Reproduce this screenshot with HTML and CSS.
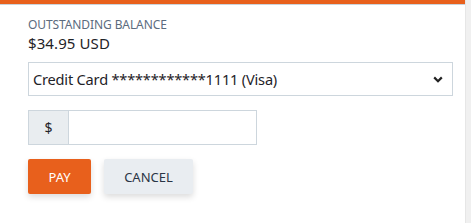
FILE: index.html
```html
<!DOCTYPE html>
<html>
<head>
<meta charset="utf-8">
<link rel="stylesheet" href="styles.css">
</head>
<body>
<div class="page">
  <div class="main">
    <div class="topbar"></div>
    <div class="content">
      <div class="label">OUTSTANDING BALANCE</div>
      <div class="amount">$34.95 USD</div>
      <div class="select">
        <span class="select-text">Credit Card ************1111 (Visa)</span>
        <svg class="chev" width="10" height="7" viewBox="0 0 10 7"><path d="M1.2 1.4 L5 5.2 L8.8 1.4" fill="none" stroke="#222" stroke-width="2.2"/></svg>
      </div>
      <div class="group">
        <div class="addon">$</div>
        <div class="field"></div>
      </div>
      <div class="buttons">
        <button class="btn pay">PAY</button>
        <button class="btn cancel">CANCEL</button>
      </div>
    </div>
  </div>
  <div class="scroll"></div>
</div>
</body>
</html>
```
FILE: styles.css
```css
html, body { margin: 0; padding: 0; background: #fff; }
body { font-family: "Noto Sans", "Open Sans", sans-serif; color: #212529; }
.page { display: flex; width: 471px; height: 223px; overflow: hidden; }
.main { flex: 1; }
.scroll { width: 5px; background: #f0f0f0; border-left: 1px solid #e6e6e6; }
.topbar { height: 4px; background: #e8601c; border-bottom: 1px solid #c9d3db; }
.content { padding: 12px 0 0 28px; }
.label { font-size: 12px; line-height: 16px; color: #5b6b7e; letter-spacing: -0.1px; }
.amount { font-size: 15px; line-height: 20px; color: #1f2328; letter-spacing: 0.1px; }
.select { margin-top: 9px; height: 32px; border: 1px solid #cdd6dd; display: flex; align-items: center; justify-content: space-between; padding: 0 9px 0 4px; width: 410px; }
.select-text { font-size: 14.6px; color: #1f2328; letter-spacing: -0.2px; }
.chev { margin-top: 1px; }
.group { margin-top: 14px; display: flex; width: 227px; height: 33px; border: 1px solid #cdd6dd; }
.addon { width: 39px; background: #e9edf0; border-right: 1px solid #cdd6dd; display: flex; align-items: center; justify-content: center; font-size: 14px; color: #1f2328; }
.field { flex: 1; background: #fff; }
.buttons { margin-top: 14px; display: flex; gap: 13px; }
.btn { font-family: inherit; font-size: 13px; border: none; border-radius: 2px; height: 35px; padding: 0; box-shadow: 0 3px 6px rgba(0,0,0,0.14); }
.pay { width: 63px; background: #e8601c; color: #fff; }
.cancel { width: 89px; background: #e9edf1; color: #2a3545; }
```
